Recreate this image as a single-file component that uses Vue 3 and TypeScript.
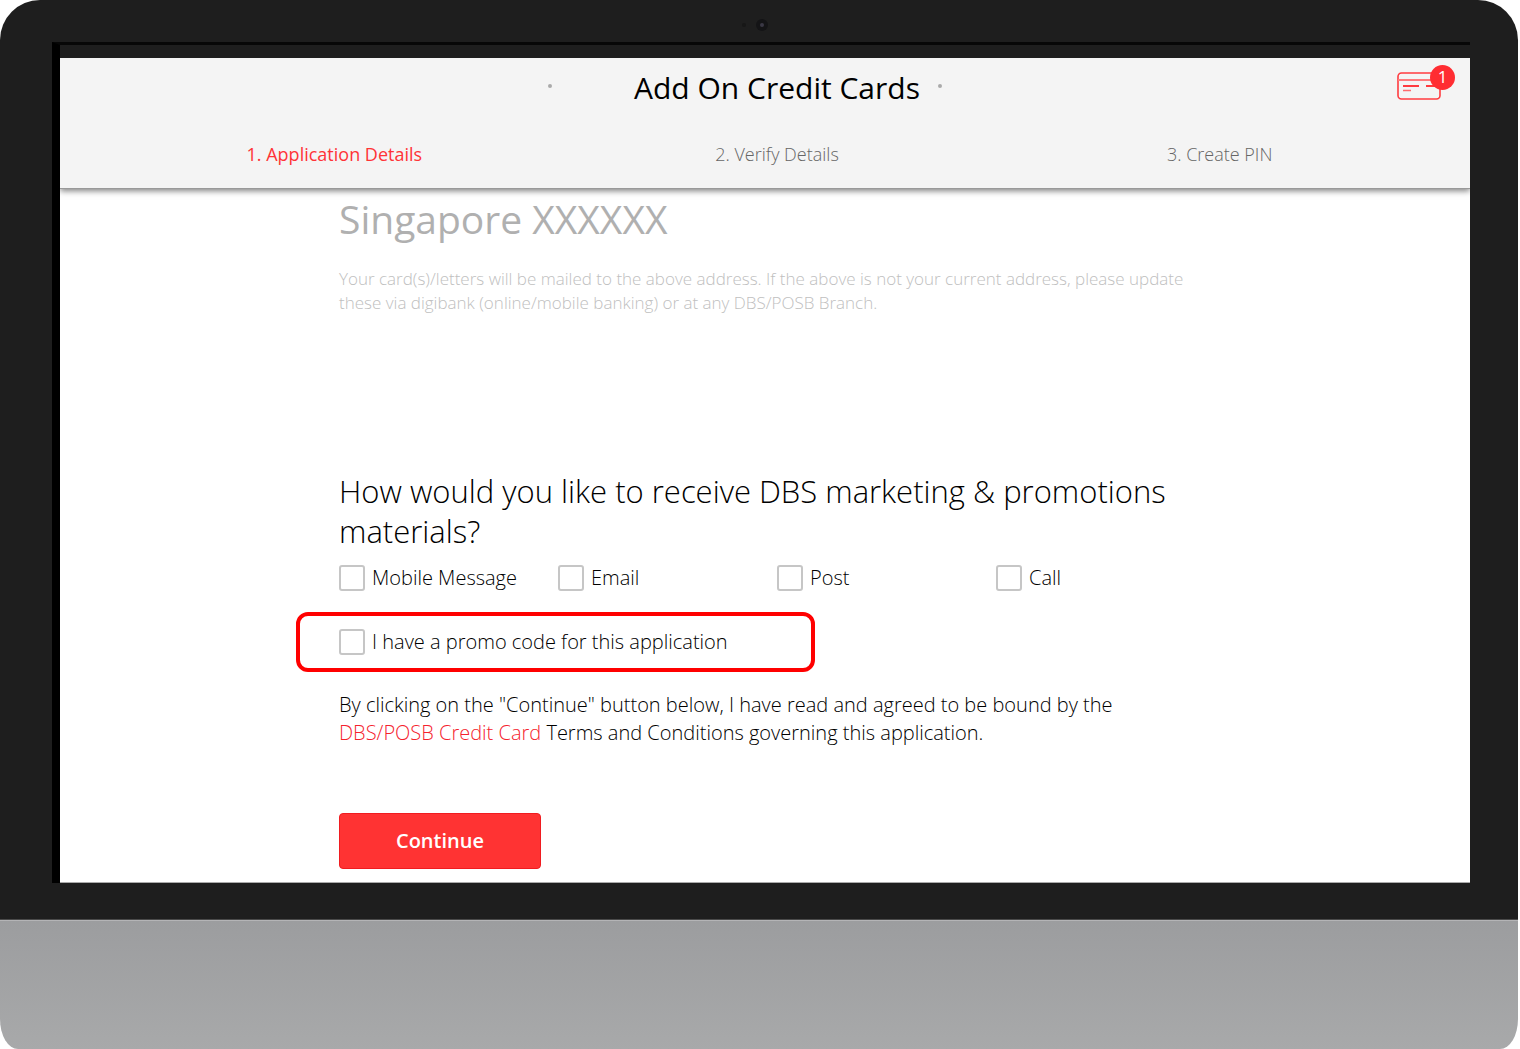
<script setup lang="ts">
import { ref } from 'vue'

const steps: string[] = ['1. Application Details', '2. Verify Details', '3. Create PIN']
const channels: string[] = ['Mobile Message', 'Email', 'Post', 'Call']
const selected = ref<string[]>([])
const hasPromo = ref(false)
</script>

<template>
  <div class="monitor">
    <div class="bezel">
      <svg class="camera" viewBox="0 0 40 20" aria-hidden="true">
        <circle cx="8" cy="10" r="2" fill="#171717" />
        <circle cx="26" cy="10" r="6" fill="#141416" />
        <circle cx="26" cy="10" r="2" fill="#3a3845" />
      </svg>
      <div class="frame">
        <div class="screen">
          <header class="top">
            <div class="title-row">
              <div class="side side-left"><span class="speck"></span></div>
              <h1>Add On Credit Cards</h1>
              <div class="side side-right">
                <span class="speck"></span>
                <button class="cards" type="button" aria-label="Selected cards">
                  <svg viewBox="0 0 44 28" fill="none" stroke="#ff3b3f" aria-hidden="true">
                    <rect x="1" y="1" width="42" height="26" rx="3.5" stroke-width="1.6" />
                    <path d="M1 8H43" stroke-width="2" stroke="#ff7a7c" />
                    <path d="M6 14H22M29 14H38" stroke-width="1.8" />
                    <path d="M6 18.500H14" stroke-width="1.500" stroke="#ff6a6c" />
                  </svg>
                  <span class="badge">1</span>
                </button>
              </div>
            </div>
            <ol class="steps">
              <li v-for="(step, i) in steps" :key="step" :class="{ active: i === 0 }">{{ step }}</li>
            </ol>
          </header>

          <main class="content">
            <p class="address">Singapore XXXXXX</p>
            <p class="note">
              Your card(s)/letters will be mailed to the above address. If the above is not your current address, please update<br />
              these via digibank (online/mobile banking) or at any DBS/POSB Branch.
            </p>

            <h2>How would you like to receive DBS marketing &amp; promotions<br />materials?</h2>
            <div class="channels">
              <label v-for="channel in channels" :key="channel" class="check">
                <input v-model="selected" type="checkbox" :value="channel" />
                <span>{{ channel }}</span>
              </label>
            </div>

            <div class="promo">
              <label class="check">
                <input v-model="hasPromo" type="checkbox" />
                <span>I have a promo code for this application</span>
              </label>
            </div>

            <p class="terms">
              By clicking on the "Continue" button below, I have read and agreed to be bound by the<br />
              <a href="#terms">DBS/POSB Credit Card</a> Terms and Conditions governing this application.
            </p>

            <button class="continue" type="button">Continue</button>
          </main>
        </div>
      </div>
    </div>
    <div class="chin"></div>
  </div>
</template>

<style>
body {
  margin: 0;
  background: #fff;
}
</style>

<style scoped>
.monitor {
  display: flex;
  flex-direction: column;
  min-height: 100vh;
  margin-right: 2px;
  font-family: "Open Sans", "Noto Sans", sans-serif;
  font-weight: 300;
  color: #000;
}

.bezel {
  position: relative;
  box-sizing: border-box;
  padding: 42px 48px 36px 52px;
  background: #1e1e1e;
  border-radius: 40px 40px 0 0;
  border-bottom: 1px solid #4a4a4a;
}

.camera {
  position: absolute;
  top: 15px;
  left: 50%;
  width: 40px;
  height: 20px;
  margin-left: -23px;
}

.frame {
  padding-top: 13px;
  border-top: 3px solid #070707;
  border-left: 8px solid #000;
}

.screen {
  background: #fff;
  border-bottom: 1px solid #aaa;
}

.top {
  position: relative;
  box-sizing: border-box;
  height: 131px;
  padding: 8px 29px 0 53px;
  background: #f4f4f4;
  border-bottom: 1px solid #999;
  clip-path: inset(0 0 -12px 0);
  box-shadow: 0 2px 6px rgba(0, 0, 0, 0.5);
}

.title-row {
  display: grid;
  grid-template-columns: 1fr auto 1fr;
  height: 44px;
}

h1 {
  margin: 0;
  font-size: 30px;
  line-height: 44px;
  font-weight: 400;
}

.side {
  display: flex;
  align-items: center;
  height: 40px;
}

.side-left {
  justify-content: flex-end;
  padding-right: 82px;
}

.side-right {
  justify-content: space-between;
  padding-left: 18px;
}

.speck {
  width: 4px;
  height: 4px;
  border-radius: 2px;
  background: #aaa;
}

.cards {
  position: relative;
  width: 44px;
  height: 28px;
  padding: 0;
  border: 0;
  background: none;
}

.cards svg {
  display: block;
  width: 44px;
  height: 28px;
}

.badge {
  position: absolute;
  top: -7px;
  right: -14px;
  width: 25px;
  height: 25px;
  border-radius: 50%;
  background: #ff2d32;
  color: #fff;
  font: 400 17px/23px "Open Sans", "Noto Sans", sans-serif;
  text-align: center;
}

.steps {
  display: grid;
  grid-template-columns: repeat(3, 1fr);
  margin: 30px 0 0;
  padding: 0;
  list-style: none;
  font-size: 18px;
  line-height: 28px;
  text-align: center;
  color: #666;
}

.steps .active {
  color: #ff3337;
  font-weight: 400;
}

.content {
  padding: 6px 240px 13px 279px;
}

.address {
  margin: 0;
  font-size: 39px;
  line-height: 48px;
  font-weight: 400;
  color: #b0b0b0;
}

.note {
  margin: 24px 0 0;
  font-size: 17px;
  line-height: 24px;
  color: #c0c0c0;
  white-space: nowrap;
}

h2 {
  margin: 156px 0 0;
  font-size: 31px;
  line-height: 40px;
  font-weight: 300;
  white-space: nowrap;
}

.channels {
  display: grid;
  grid-template-columns: repeat(4, 219px);
  margin-top: 13px;
}

.check {
  display: flex;
  align-items: center;
  gap: 7px;
  font-size: 20px;
  line-height: 28px;
  white-space: nowrap;
}

.check input {
  appearance: none;
  box-sizing: border-box;
  flex: none;
  width: 26px;
  height: 26px;
  margin: 0;
  border: 2px solid #c6c6c6;
  border-radius: 3px;
  background: #fff;
}

.check input:checked {
  background: #ff3333;
}

.promo {
  box-sizing: border-box;
  width: 519px;
  margin: 20px 0 0 -43px;
  padding: 12px 39px;
  border: 4px solid #f00;
  border-radius: 12px;
}

.terms {
  margin: 19px 0 0;
  font-size: 20px;
  line-height: 28px;
  white-space: nowrap;
}

.terms a {
  color: #f5222d;
  text-decoration: none;
}

.continue {
  display: block;
  width: 202px;
  height: 56px;
  margin-top: 66px;
  border: 1px solid #f01c20;
  border-radius: 4px;
  background: #ff3333;
  color: #fff;
  font: 600 20px/28px "Open Sans", "Noto Sans", sans-serif;
}

.chin {
  flex: 1;
  min-height: 80px;
  border-top: 1px solid #b4b4b6;
  border-radius: 0 0 18px 18px / 0 0 30px 30px;
  background: linear-gradient(#9c9d9f, #a8a9aa);
}
</style>
